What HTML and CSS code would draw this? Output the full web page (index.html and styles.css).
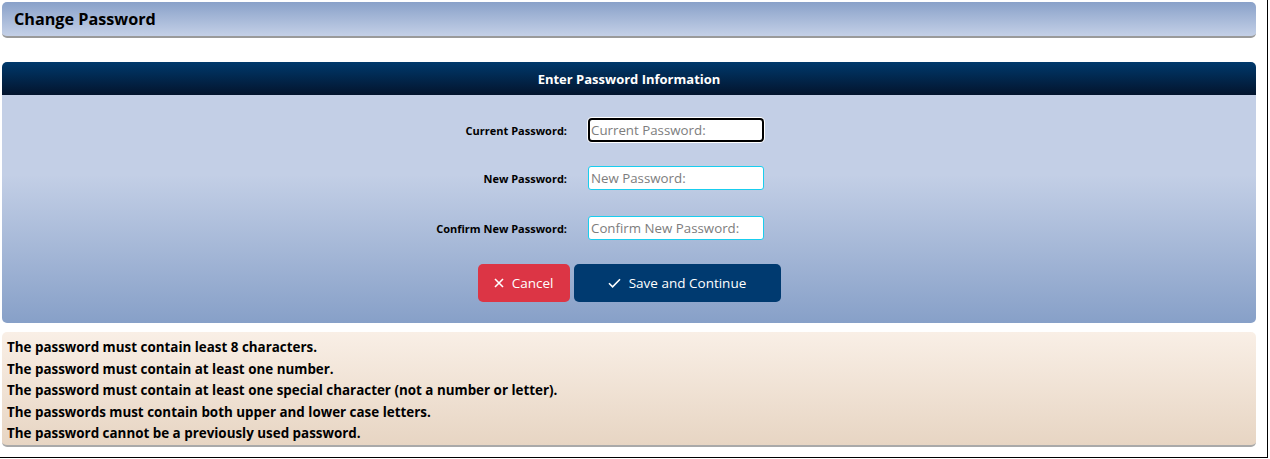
FILE: index.html
```html
<!DOCTYPE html>
<html>
<head>
    <meta charset="UTF-8">
    <title>Change Password</title>
    <link rel="stylesheet" href="styles.css">
</head>
<body>
<div class="frame">
    <div class="page-title">Change Password</div>

    <div class="panel">
        <div class="panel-head">Enter Password Information</div>
        <div class="panel-body">
            <form class="pw-form">
                <label for="cur">Current Password:</label>
                <input type="password" id="cur" class="focused" placeholder="Current Password:">
                <label for="new">New Password:</label>
                <input type="password" id="new" placeholder="New Password:">
                <label for="conf" class="last">Confirm New Password:</label>
                <input type="password" id="conf" class="last" placeholder="Confirm New Password:">
            </form>
            <div class="actions">
                <button type="button" class="btn btn-cancel">
                    <svg width="10" height="10" viewBox="0 0 10 10"><path d="M1 1L9 9M9 1L1 9" stroke="#fff" stroke-width="1.6" fill="none"/></svg>
                    Cancel
                </button>
                <button type="button" class="btn btn-save">
                    <svg width="13" height="10" viewBox="0 0 13 10"><path d="M1 5.2L4.6 8.8L12 1.2" stroke="#fff" stroke-width="1.6" fill="none"/></svg>
                    Save and Continue
                </button>
            </div>
        </div>
    </div>

    <div class="rules">
        <p>The password must contain least 8 characters.</p>
        <p>The password must contain at least one number.</p>
        <p>The password must contain at least one special character (not a number or letter).</p>
        <p>The passwords must contain both upper and lower case letters.</p>
        <p>The password cannot be a previously used password.</p>
    </div>
</div>
</body>
</html>
```

FILE: styles.css
```css
body {
    margin: 0;
    font-family: "Open Sans", "Noto Sans", sans-serif;
    background-color: #fff;
}
.frame {
    width: 1254px;
    height: 455px;
    padding: 2px 11px 0 2px;
    border-right: 1px solid #000;
    border-bottom: 1px solid #000;
}
.page-title {
    height: 34px;
    padding-left: 12px;
    line-height: 35px;
    font-size: 16.2px;
    font-weight: bold;
    color: #000;
    border-radius: 5px;
    background: linear-gradient(#89a1c9, #c4d0e7);
    border-bottom: 2px solid #9a9a9a;
}
.panel {
    margin-top: 24px;
}
.panel-head {
    height: 33px;
    line-height: 35px;
    text-align: center;
    color: #fff;
    font-size: 13px;
    font-weight: bold;
    border-radius: 5px 5px 0 0;
    background: linear-gradient(#00396c, #03142d);
}
.panel-body {
    height: 228px;
    padding-top: 23px;
    box-sizing: border-box;
    border-radius: 0 0 5px 5px;
    background: linear-gradient(#c3cfe6 0%, #c3cfe6 35%, #87a0c8 100%);
}
.pw-form {
    display: grid;
    grid-template-columns: 565px 176px;
    column-gap: 21px;
    row-gap: 24px;
    align-items: center;
    margin: 0;
}
.pw-form label {
    text-align: right;
    font-size: 11px;
    font-weight: bold;
    color: #000;
}
.pw-form .last {
    margin-top: 2px;
}
.pw-form input {
    box-sizing: border-box;
    width: 176px;
    height: 24px;
    padding: 0 2px;
    font-family: "Open Sans", "Noto Sans", sans-serif;
    font-size: 13.3px;
    border: 1px solid #19cdee;
    border-radius: 3px;
    background-color: #fff;
    outline: none;
}
.pw-form input.focused {
    border: 2px solid #000;
    border-radius: 4px;
    padding: 0 1px;
    box-shadow: 0 0 0 1px #fff;
}
.pw-form input::placeholder {
    color: #7d7d7d;
}
.actions {
    display: flex;
    justify-content: center;
    gap: 4px;
    margin-top: 24px;
}
.btn {
    display: flex;
    align-items: center;
    justify-content: center;
    gap: 8px;
    height: 38px;
    border: none;
    border-radius: 5px;
    color: #fff;
    font-family: "Open Sans", "Noto Sans", sans-serif;
    font-size: 13.5px;
    cursor: pointer;
}
.btn-cancel {
    width: 92px;
    background-color: #dc3545;
}
.btn-save {
    width: 207px;
    background-color: #003a70;
}
.rules {
    margin-top: 9px;
    height: 115px;
    padding: 5px 5px 0;
    box-sizing: border-box;
    border-radius: 5px;
    background: linear-gradient(#f9efe6, #e7d5c3);
    border-bottom: 2px solid #a9a9a9;
}
.rules p {
    margin: 0;
    font-size: 13.4px;
    font-weight: bold;
    line-height: 21.5px;
    color: #000;
}
```
